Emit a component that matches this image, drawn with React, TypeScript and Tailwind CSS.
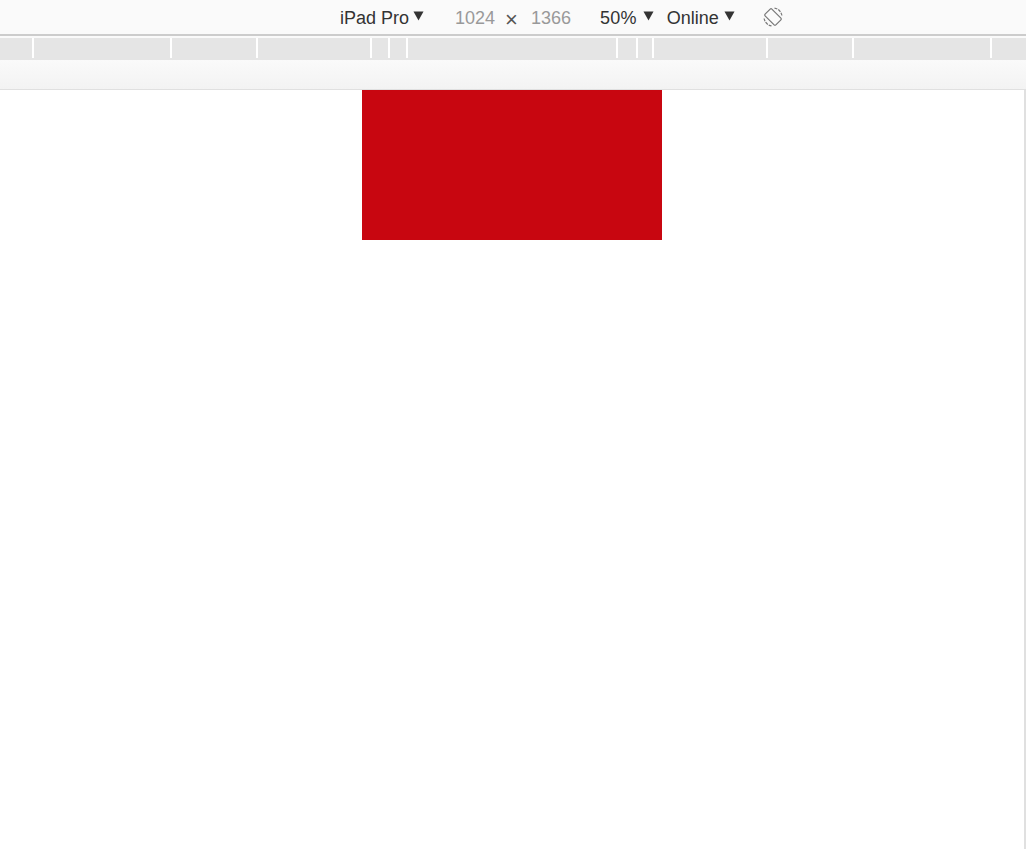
import React from "react";

const Tick = ({ className }: { className: string }) => (
  <div className={`h-[20px] w-[2px] bg-white shrink-0 ${className}`} />
);

const Caret = ({ className = "" }: { className?: string }) => (
  <svg width="11" height="10" viewBox="0 0 11 10" className={`shrink-0 ${className}`}>
    <path d="M0.5 0.5H10.5L5.5 9.5Z" fill="#333" />
  </svg>
);

export default function App() {
  return (
    <div className="h-[850px] w-[1026px] overflow-hidden bg-white font-['Liberation_Sans',Arial,sans-serif]">
      <div className="flex h-[34px] items-center bg-[#fafafa] pt-[2px] text-[18px] leading-[32px] text-[#333]">
        <span className="ml-[340px]">iPad Pro</span>
        <Caret className="ml-[4px] mb-[4px]" />
        <span className="ml-[31px] text-[#999]">1024</span>
        <span className="ml-[10px] mt-[4px] text-[22px] text-[#555]">×</span>
        <span className="ml-[13px] text-[#999]">1366</span>
        <span className="ml-[29px] tracking-[0.2px]">50%</span>
        <Caret className="ml-[6px] mb-[4px]" />
        <span className="ml-[13px]">Online</span>
        <Caret className="ml-[5px] mb-[4px]" />
        <svg width="20" height="20" viewBox="0 0 20 20" className="ml-[28px] mb-[2px] shrink-0" fill="none" stroke="#777" strokeWidth="1.2">
          <rect x="5.2" y="2.4" width="9.6" height="15.2" rx="1.2" transform="rotate(-45 10 10)" />
          <path d="M11.5 1.1A9 9 0 0 1 18.9 8.5M8.5 18.9A9 9 0 0 1 1.1 11.5" strokeDasharray="3 1" />
        </svg>
      </div>
      <div className="h-[2px] bg-[#ccc]" />
      <div className="h-[2px] bg-[#fafafa]" />
      <div className="flex h-[22px] items-start bg-[#e5e5e5]">
        <Tick className="ml-[32px]" />
        <Tick className="ml-[136px]" />
        <Tick className="ml-[84px]" />
        <Tick className="ml-[112px]" />
        <Tick className="ml-[16px]" />
        <Tick className="ml-[16px]" />
        <Tick className="ml-[208px]" />
        <Tick className="ml-[18px]" />
        <Tick className="ml-[14px]" />
        <Tick className="ml-[112px]" />
        <Tick className="ml-[84px]" />
        <Tick className="ml-[136px]" />
      </div>
      <div className="h-[29px] bg-gradient-to-b from-[#fafafa] to-[#f3f3f3]" />
      <div className="flex h-[760px] border-t border-r-2 border-[#e0e0e0] bg-white">
        <div className="mx-auto h-[150px] w-[300px] bg-[#c80610]" />
      </div>
    </div>
  );
}
